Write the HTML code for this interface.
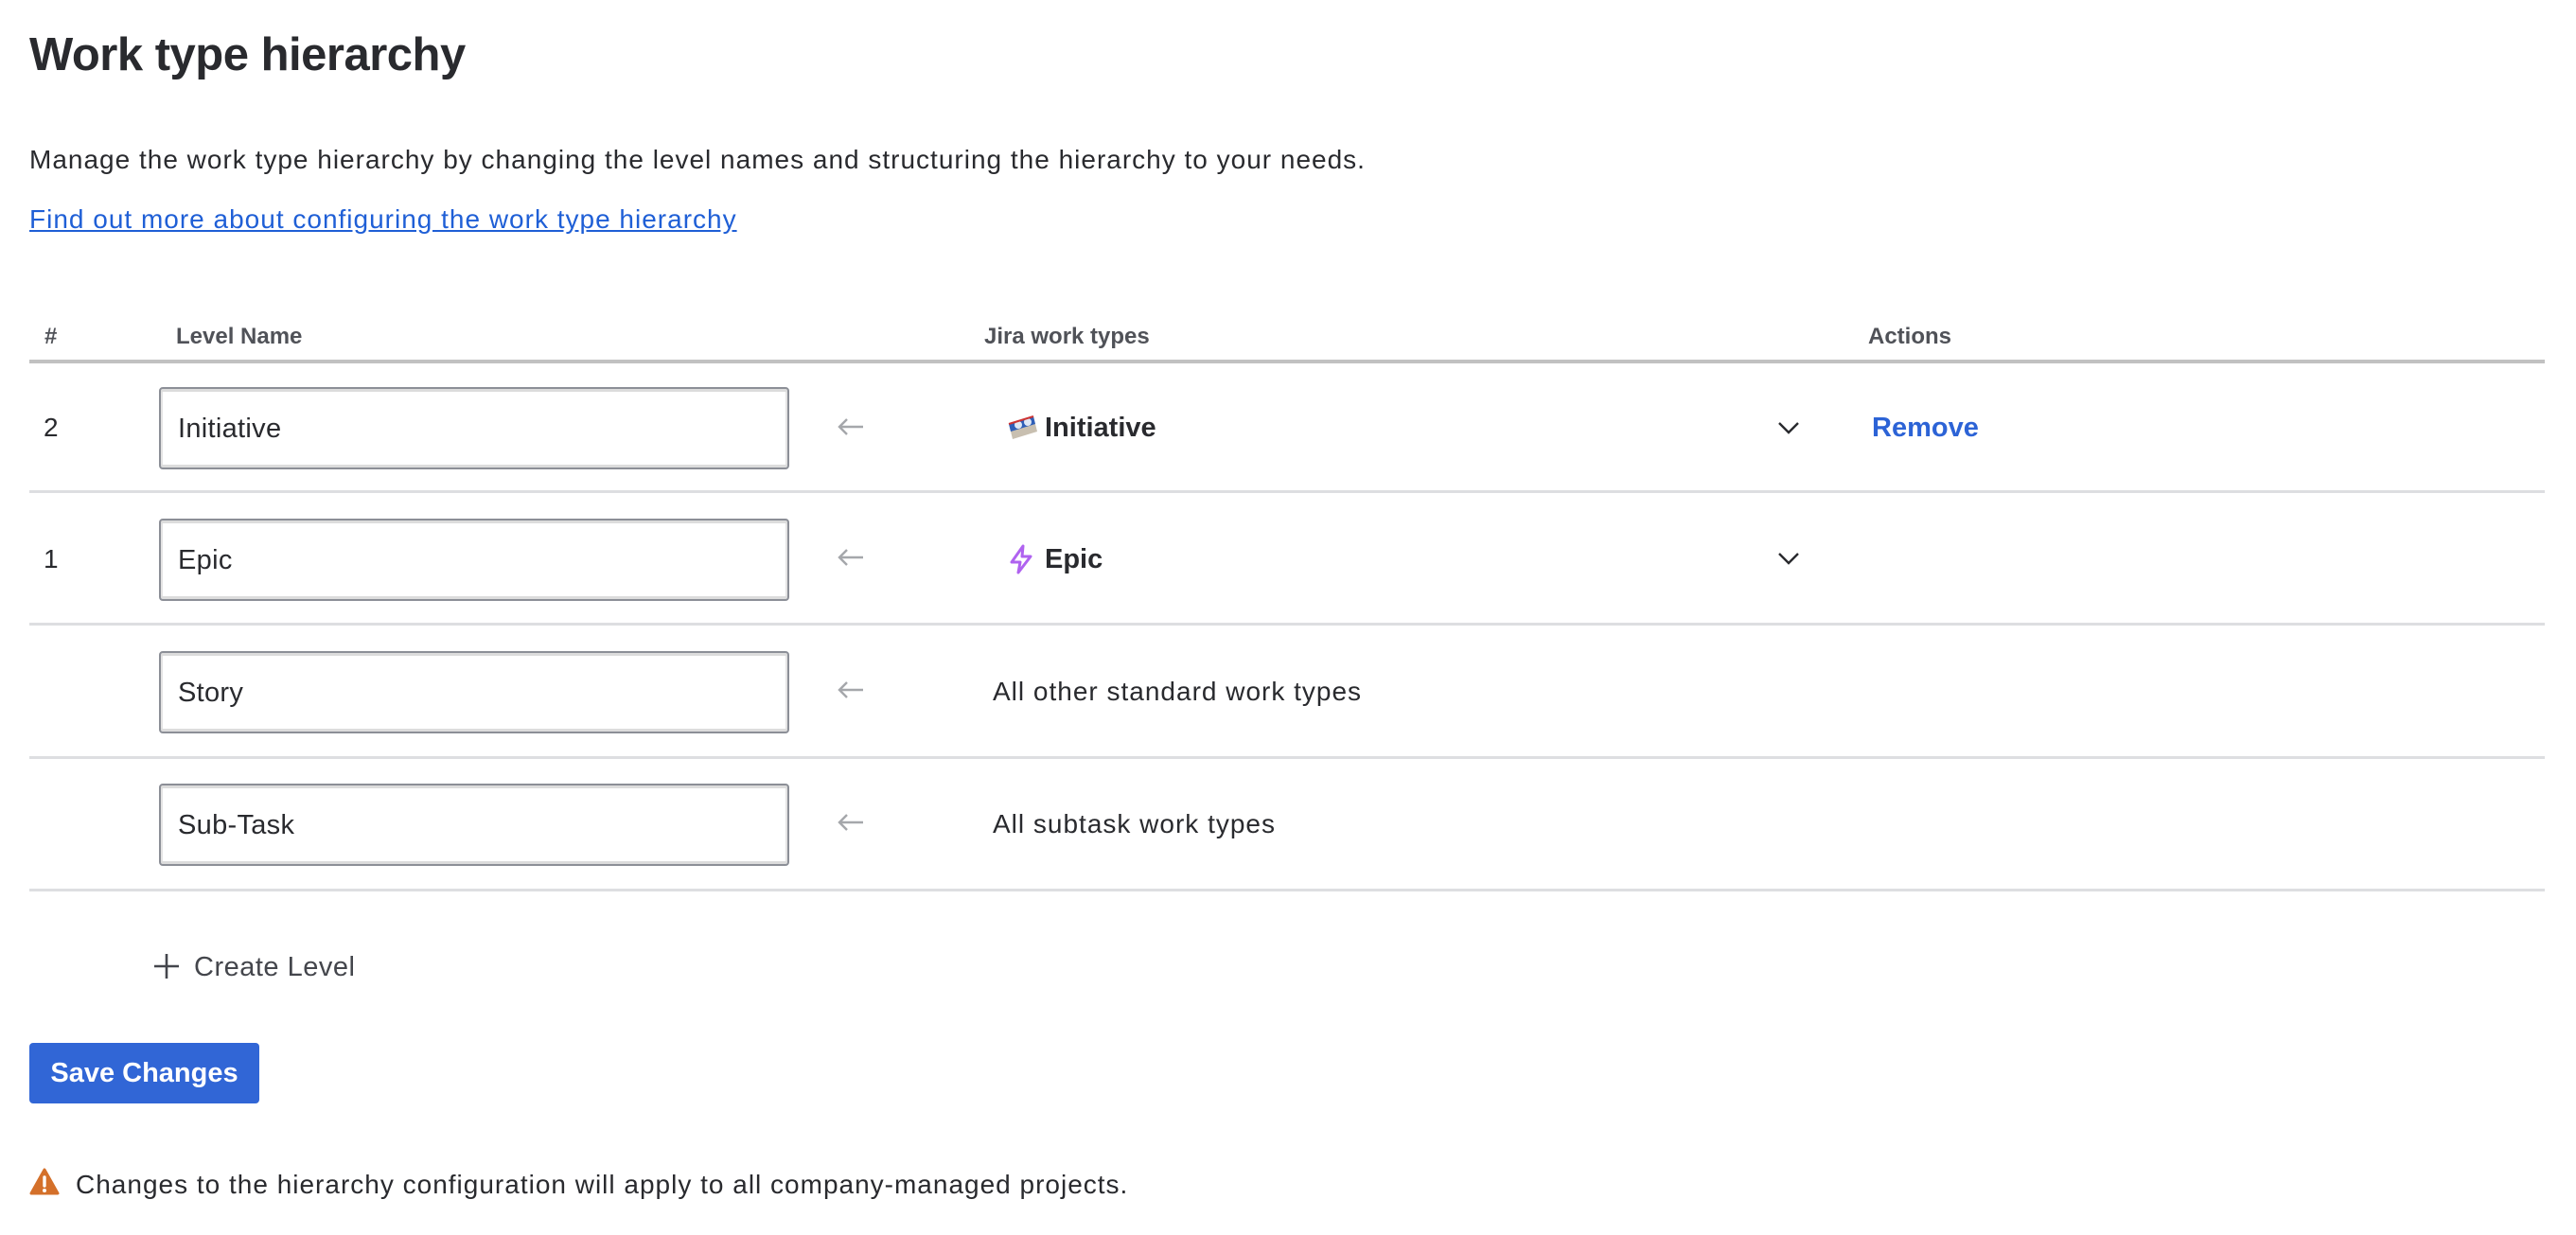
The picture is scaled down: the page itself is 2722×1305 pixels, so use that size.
<!DOCTYPE html>
<html><head><meta charset="utf-8"><style>
*{margin:0;padding:0;box-sizing:border-box}
body{width:2722px;height:1305px;background:#fff;font-family:"Liberation Sans",sans-serif;color:#292a2e;position:relative;overflow:hidden}
.a{position:absolute;white-space:nowrap}
h1{position:absolute;left:31px;top:30px;font-size:49px;font-weight:bold;color:#292a2e;letter-spacing:-0.5px}
.t{font-size:28px;letter-spacing:1px}
.h{font-size:24px;font-weight:bold;color:#505258;top:342px}
.line{position:absolute;left:31px;width:2658px;height:3px;background:#dddee1}
.inp{position:absolute;left:168px;width:666px;height:87px;border:2px solid #8c8f97;border-radius:4px;box-shadow:inset 0 3px 0 #dcdcdc,inset 0 -3px 0 #dcdcdc,inset 2px 0 0 #e4e4e4,inset -2px 0 0 #e4e4e4;font-size:29px;padding-left:18px;line-height:85px;letter-spacing:0.3px}
.arr{position:absolute;left:884px;width:30px;height:20px}
.chev{position:absolute;left:1878px;width:24px;height:14px}
</style></head><body>
<h1>Work type hierarchy</h1>
<div class="a t" style="left:31px;top:153px">Manage the work type hierarchy by changing the level names and structuring the hierarchy to your needs.</div>
<div class="a t" style="left:31px;top:216px;color:#1f5fd6;text-decoration:underline">Find out more about configuring the work type hierarchy</div>

<div class="a h" style="left:47px">#</div>
<div class="a h" style="left:186px">Level Name</div>
<div class="a h" style="left:1040px">Jira work types</div>
<div class="a h" style="left:1974px">Actions</div>
<div class="line" style="top:380px;height:4px;background:#c1c1c1"></div>
<div class="line" style="top:518px"></div>
<div class="line" style="top:658px"></div>
<div class="line" style="top:799px"></div>
<div class="line" style="top:939px"></div>

<div class="a t" style="left:46px;top:436px">2</div>
<div class="a t" style="left:46px;top:575px">1</div>

<div class="inp" style="top:409px">Initiative</div>
<div class="inp" style="top:548px">Epic</div>
<div class="inp" style="top:688px">Story</div>
<div class="inp" style="top:828px">Sub-Task</div>

<svg class="arr" style="top:441px" viewBox="0 0 30 20"><path d="M28 10H3M11 2L3 10L11 18" fill="none" stroke="#a5a7ab" stroke-width="2.4"/></svg>
<svg class="arr" style="top:579px" viewBox="0 0 30 20"><path d="M28 10H3M11 2L3 10L11 18" fill="none" stroke="#a5a7ab" stroke-width="2.4"/></svg>
<svg class="arr" style="top:719px" viewBox="0 0 30 20"><path d="M28 10H3M11 2L3 10L11 18" fill="none" stroke="#a5a7ab" stroke-width="2.4"/></svg>
<svg class="arr" style="top:859px" viewBox="0 0 30 20"><path d="M28 10H3M11 2L3 10L11 18" fill="none" stroke="#a5a7ab" stroke-width="2.4"/></svg>

<svg class="a" style="left:1064px;top:438px" width="34" height="28" viewBox="0 0 34 28"><path d="M2 10L28 2L32 18L6 26Z" fill="#c8bfb0"/><path d="M2 10L28 2L30 10L4 18Z" fill="#2f5fb8"/><circle cx="12" cy="11" r="4" fill="#dfe8f5"/><circle cx="22" cy="8" r="4" fill="#dfe8f5"/><path d="M2 10L28 2" stroke="#c33" stroke-width="2"/></svg>
<div class="a" style="left:1104px;top:436px;font-size:29px;font-weight:bold;color:#292a2e">Initiative</div>
<svg class="a" style="left:1066px;top:575px" width="26" height="32" viewBox="0 0 26 32"><path d="M15 2L3 19H12L10 30L23 13H14Z" fill="none" stroke="#b063f0" stroke-width="3" stroke-linejoin="round"/></svg>
<div class="a" style="left:1104px;top:575px;font-size:29px;font-weight:bold;color:#292a2e">Epic</div>
<div class="a t" style="left:1049px;top:715px">All other standard work types</div>
<div class="a t" style="left:1049px;top:855px">All subtask work types</div>

<svg class="chev" style="top:445px" viewBox="0 0 24 14"><path d="M2 2L12 12L22 2" fill="none" stroke="#292a2e" stroke-width="2.4"/></svg>
<svg class="chev" style="top:583px" viewBox="0 0 24 14"><path d="M2 2L12 12L22 2" fill="none" stroke="#292a2e" stroke-width="2.4"/></svg>
<div class="a" style="left:1978px;top:436px;font-size:29px;font-weight:bold;color:#2c63d6">Remove</div>

<svg class="a" style="left:162px;top:1007px" width="28" height="28" viewBox="0 0 28 28"><path d="M14 1V27M1 14H27" stroke="#44464c" stroke-width="2.6"/></svg>
<div class="a" style="left:205px;top:1006px;font-size:29px;color:#44464c;letter-spacing:0.5px">Create Level</div>

<div class="a" style="left:31px;top:1102px;width:243px;height:64px;background:#3166d6;border-radius:4px;color:#fff;font-size:29px;font-weight:bold;line-height:64px;text-align:center">Save Changes</div>

<svg class="a" style="left:31px;top:1234px" width="32" height="30" viewBox="0 0 32 30"><path d="M16 2L30 27H2Z" fill="#d4702a" stroke="#d4702a" stroke-width="3" stroke-linejoin="round"/><path d="M16 10V19" stroke="#fff" stroke-width="3.4" stroke-linecap="round"/><circle cx="16" cy="24" r="2" fill="#fff"/></svg>
<div class="a t" style="left:80px;top:1236px">Changes to the hierarchy configuration will apply to all company-managed projects.</div>
</body></html>
